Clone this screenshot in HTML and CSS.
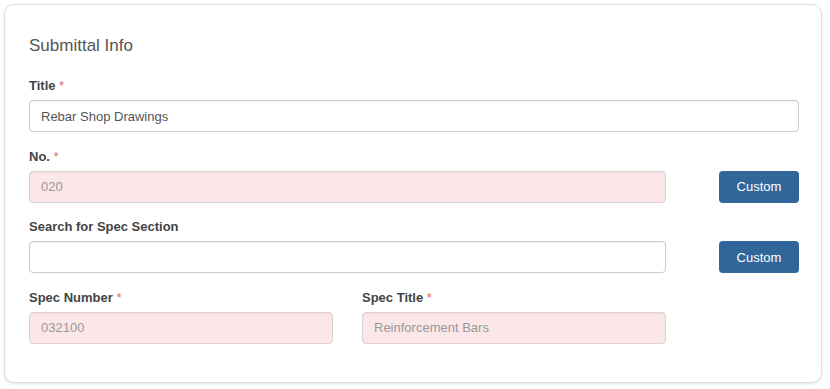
FILE: index.html
```html
<!DOCTYPE html>
<html lang="en">
  <head>
    <meta charset="UTF-8" />
    <title>Submittal Info</title>
    <link rel="stylesheet" href="styles.css">
  </head>
  <body>
    <div class="card">
      <h2 class="card-title">Submittal Info</h2>

      <div class="form-group">
        <label>Title <span class="req">*</span></label>
        <div class="field-row">
          <input type="text" class="field field-full" value="Rebar Shop Drawings" />
        </div>
      </div>

      <div class="form-group">
        <label>No. <span class="req">*</span></label>
        <div class="field-row">
          <input type="text" class="field field-main locked" value="020" disabled />
          <button type="button" class="custom-btn">Custom</button>
        </div>
      </div>

      <div class="form-group">
        <label>Search for Spec Section</label>
        <div class="field-row">
          <input type="text" class="field field-main" />
          <button type="button" class="custom-btn">Custom</button>
        </div>
      </div>

      <div class="split-row">
        <div class="form-group">
          <label>Spec Number <span class="req">*</span></label>
          <input type="text" class="field field-half locked" value="032100" disabled />
        </div>
        <div class="form-group">
          <label>Spec Title <span class="req">*</span></label>
          <input type="text" class="field field-half locked" value="Reinforcement Bars" disabled />
        </div>
      </div>
    </div>
  </body>
</html>
```

FILE: styles.css
```css
body {
  margin: 0;
  padding: 4px;
  background: #fff;
  font-family: "Liberation Sans", Arial, sans-serif;
  color: #333;
}

.card {
  width: 818px;
  height: 379px;
  box-sizing: border-box;
  border: 1px solid #dedede;
  border-radius: 10px;
  box-shadow: 0 1px 3px rgba(0, 0, 0, 0.12);
  padding: 31px 22px 0 24px;
  background: #fff;
}

.card-title {
  margin: 0 0 21px;
  font-size: 17px;
  line-height: 20px;
  font-weight: normal;
  color: #555;
}

.form-group {
  margin-bottom: 15.5px;
}

label {
  display: block;
  font-size: 13px;
  line-height: 17px;
  font-weight: bold;
  color: #444;
  margin-bottom: 6px;
}

.req {
  color: #e06a6a;
  font-weight: normal;
}

.field-row {
  display: flex;
  justify-content: space-between;
  align-items: center;
}

.field {
  height: 32px;
  box-sizing: border-box;
  border: 1px solid #ccc;
  border-radius: 4px;
  padding: 0 11px;
  font-family: "Liberation Sans", Arial, sans-serif;
  font-size: 13px;
  color: #555;
  background: #fff;
  box-shadow: inset 0 1px 1px rgba(0, 0, 0, 0.05);
}

.field-full {
  width: 770px;
}

.field-main {
  width: 637px;
}

.field-half {
  width: 304px;
}

.locked {
  background: #fbe7e7;
  border-color: #ddd0d0;
  color: #999;
}

.custom-btn {
  width: 80px;
  height: 32px;
  border: none;
  border-radius: 4px;
  background: #31669a;
  color: #fff;
  font-family: "Liberation Sans", Arial, sans-serif;
  font-size: 13px;
  cursor: pointer;
}

.split-row {
  display: flex;
  gap: 29px;
}
```
